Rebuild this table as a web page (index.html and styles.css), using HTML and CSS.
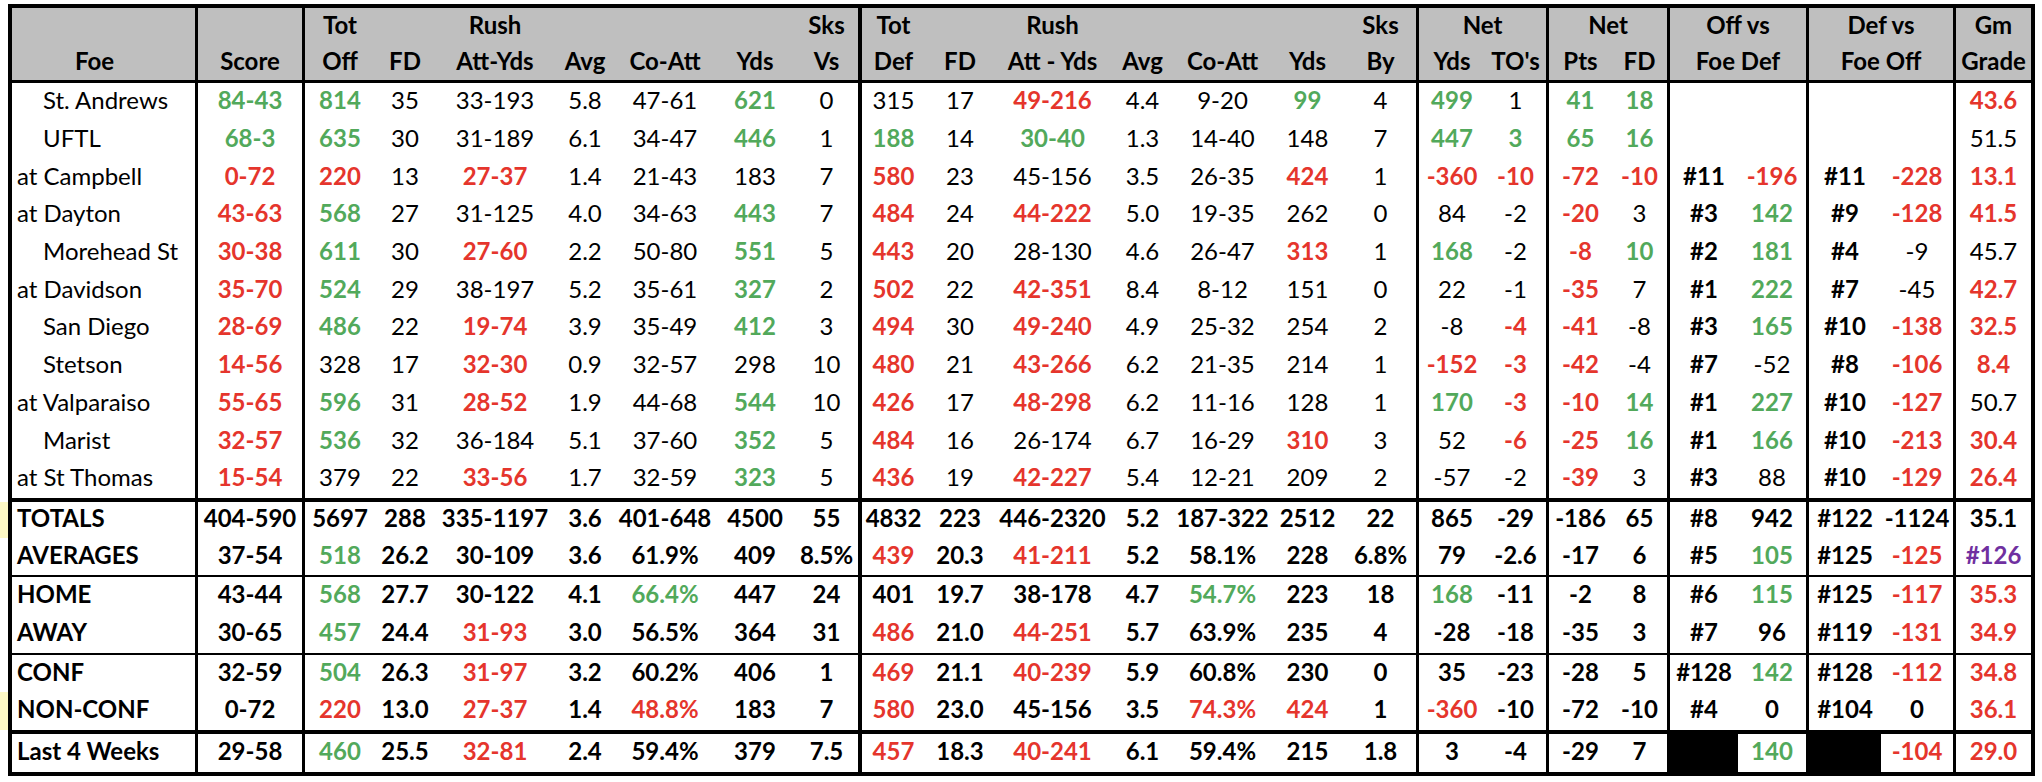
FILE: index.html
```html
<!DOCTYPE html>
<html>
<head>
<meta charset="utf-8">
<link rel="stylesheet" href="styles.css">
</head>
<body>
<div class="page">
<div class="stats">
  <div class="sec head">
    <div class="hrow">
      <span></span><span class="l"></span><span class="l">Tot</span><span></span><span>Rush</span><span></span><span></span><span></span><span>Sks</span>
      <span class="lt">Tot</span><span></span><span>Rush</span><span></span><span></span><span></span><span>Sks</span>
      <span class="l s2">Net</span><span class="l s2">Net</span><span class="l s2">Off vs</span><span class="l s2">Def vs</span><span class="l">Gm</span>
    </div>
    <div class="hrow">
      <span class="foeh">Foe</span><span class="l">Score</span><span class="l">Off</span><span>FD</span><span>Att-Yds</span><span>Avg</span><span>Co-Att</span><span>Yds</span><span>Vs</span>
      <span class="lt">Def</span><span>FD</span><span>Att - Yds</span><span>Avg</span><span>Co-Att</span><span>Yds</span><span>By</span>
      <span class="l">Yds</span><span>TO's</span><span class="l">Pts</span><span>FD</span><span class="l s2">Foe Def</span><span class="l s2">Foe Off</span><span class="l">Grade</span>
    </div>
  </div>

  <div class="sec body">
    <div class="row"><span class="foe home">St. Andrews</span><span class="g">84-43</span><span class="g">814</span><span>35</span><span>33-193</span><span>5.8</span><span>47-61</span><span class="g">621</span><span>0</span><span>315</span><span>17</span><span class="r">49-216</span><span>4.4</span><span>9-20</span><span class="g">99</span><span>4</span><span class="g">499</span><span>1</span><span class="g">41</span><span class="g">18</span><span></span><span></span><span></span><span></span><span class="r">43.6</span></div>
    <div class="row"><span class="foe home">UFTL</span><span class="g">68-3</span><span class="g">635</span><span>30</span><span>31-189</span><span>6.1</span><span>34-47</span><span class="g">446</span><span>1</span><span class="g">188</span><span>14</span><span class="g">30-40</span><span>1.3</span><span>14-40</span><span>148</span><span>7</span><span class="g">447</span><span class="g">3</span><span class="g">65</span><span class="g">16</span><span></span><span></span><span></span><span></span><span>51.5</span></div>
    <div class="row"><span class="foe">at Campbell</span><span class="r">0-72</span><span class="r">220</span><span>13</span><span class="r">27-37</span><span>1.4</span><span>21-43</span><span>183</span><span>7</span><span class="r">580</span><span>23</span><span>45-156</span><span>3.5</span><span>26-35</span><span class="r">424</span><span>1</span><span class="r">-360</span><span class="r">-10</span><span class="r">-72</span><span class="r">-10</span><span class="b">#11</span><span class="r">-196</span><span class="b">#11</span><span class="r">-228</span><span class="r">13.1</span></div>
    <div class="row"><span class="foe">at Dayton</span><span class="r">43-63</span><span class="g">568</span><span>27</span><span>31-125</span><span>4.0</span><span>34-63</span><span class="g">443</span><span>7</span><span class="r">484</span><span>24</span><span class="r">44-222</span><span>5.0</span><span>19-35</span><span>262</span><span>0</span><span>84</span><span>-2</span><span class="r">-20</span><span>3</span><span class="b">#3</span><span class="g">142</span><span class="b">#9</span><span class="r">-128</span><span class="r">41.5</span></div>
    <div class="row"><span class="foe home">Morehead St</span><span class="r">30-38</span><span class="g">611</span><span>30</span><span class="r">27-60</span><span>2.2</span><span>50-80</span><span class="g">551</span><span>5</span><span class="r">443</span><span>20</span><span>28-130</span><span>4.6</span><span>26-47</span><span class="r">313</span><span>1</span><span class="g">168</span><span>-2</span><span class="r">-8</span><span class="g">10</span><span class="b">#2</span><span class="g">181</span><span class="b">#4</span><span>-9</span><span>45.7</span></div>
    <div class="row"><span class="foe">at Davidson</span><span class="r">35-70</span><span class="g">524</span><span>29</span><span>38-197</span><span>5.2</span><span>35-61</span><span class="g">327</span><span>2</span><span class="r">502</span><span>22</span><span class="r">42-351</span><span>8.4</span><span>8-12</span><span>151</span><span>0</span><span>22</span><span>-1</span><span class="r">-35</span><span>7</span><span class="b">#1</span><span class="g">222</span><span class="b">#7</span><span>-45</span><span class="r">42.7</span></div>
    <div class="row"><span class="foe home">San Diego</span><span class="r">28-69</span><span class="g">486</span><span>22</span><span class="r">19-74</span><span>3.9</span><span>35-49</span><span class="g">412</span><span>3</span><span class="r">494</span><span>30</span><span class="r">49-240</span><span>4.9</span><span>25-32</span><span>254</span><span>2</span><span>-8</span><span class="r">-4</span><span class="r">-41</span><span>-8</span><span class="b">#3</span><span class="g">165</span><span class="b">#10</span><span class="r">-138</span><span class="r">32.5</span></div>
    <div class="row"><span class="foe home">Stetson</span><span class="r">14-56</span><span>328</span><span>17</span><span class="r">32-30</span><span>0.9</span><span>32-57</span><span>298</span><span>10</span><span class="r">480</span><span>21</span><span class="r">43-266</span><span>6.2</span><span>21-35</span><span>214</span><span>1</span><span class="r">-152</span><span class="r">-3</span><span class="r">-42</span><span>-4</span><span class="b">#7</span><span>-52</span><span class="b">#8</span><span class="r">-106</span><span class="r">8.4</span></div>
    <div class="row"><span class="foe">at Valparaiso</span><span class="r">55-65</span><span class="g">596</span><span>31</span><span class="r">28-52</span><span>1.9</span><span>44-68</span><span class="g">544</span><span>10</span><span class="r">426</span><span>17</span><span class="r">48-298</span><span>6.2</span><span>11-16</span><span>128</span><span>1</span><span class="g">170</span><span class="r">-3</span><span class="r">-10</span><span class="g">14</span><span class="b">#1</span><span class="g">227</span><span class="b">#10</span><span class="r">-127</span><span>50.7</span></div>
    <div class="row"><span class="foe home">Marist</span><span class="r">32-57</span><span class="g">536</span><span>32</span><span>36-184</span><span>5.1</span><span>37-60</span><span class="g">352</span><span>5</span><span class="r">484</span><span>16</span><span>26-174</span><span>6.7</span><span>16-29</span><span class="r">310</span><span>3</span><span>52</span><span class="r">-6</span><span class="r">-25</span><span class="g">16</span><span class="b">#1</span><span class="g">166</span><span class="b">#10</span><span class="r">-213</span><span class="r">30.4</span></div>
    <div class="row"><span class="foe">at St Thomas</span><span class="r">15-54</span><span>379</span><span>22</span><span class="r">33-56</span><span>1.7</span><span>32-59</span><span class="g">323</span><span>5</span><span class="r">436</span><span>19</span><span class="r">42-227</span><span>5.4</span><span>12-21</span><span>209</span><span>2</span><span>-57</span><span>-2</span><span class="r">-39</span><span>3</span><span class="b">#3</span><span>88</span><span class="b">#10</span><span class="r">-129</span><span class="r">26.4</span></div>
  </div>

  <div class="sec sum s-a">
    <div class="row mark"><span class="foe">TOTALS</span><span>404-590</span><span>5697</span><span>288</span><span>335-1197</span><span>3.6</span><span>401-648</span><span>4500</span><span>55</span><span>4832</span><span>223</span><span>446-2320</span><span>5.2</span><span>187-322</span><span>2512</span><span>22</span><span>865</span><span>-29</span><span>-186</span><span>65</span><span>#8</span><span>942</span><span>#122</span><span>-1124</span><span>35.1</span></div>
    <div class="row"><span class="foe">AVERAGES</span><span>37-54</span><span class="g">518</span><span>26.2</span><span>30-109</span><span>3.6</span><span>61.9%</span><span>409</span><span>8.5%</span><span class="r">439</span><span>20.3</span><span class="r">41-211</span><span>5.2</span><span>58.1%</span><span>228</span><span>6.8%</span><span>79</span><span>-2.6</span><span>-17</span><span>6</span><span>#5</span><span class="g">105</span><span>#125</span><span class="r">-125</span><span class="p">#126</span></div>
  </div>

  <div class="sec sum s-b">
    <div class="row"><span class="foe">HOME</span><span>43-44</span><span class="g">568</span><span>27.7</span><span>30-122</span><span>4.1</span><span class="g">66.4%</span><span>447</span><span>24</span><span>401</span><span>19.7</span><span>38-178</span><span>4.7</span><span class="g">54.7%</span><span>223</span><span>18</span><span class="g">168</span><span>-11</span><span>-2</span><span>8</span><span>#6</span><span class="g">115</span><span>#125</span><span class="r">-117</span><span class="r">35.3</span></div>
    <div class="row"><span class="foe">AWAY</span><span>30-65</span><span class="g">457</span><span>24.4</span><span class="r">31-93</span><span>3.0</span><span>56.5%</span><span>364</span><span>31</span><span class="r">486</span><span>21.0</span><span class="r">44-251</span><span>5.7</span><span>63.9%</span><span>235</span><span>4</span><span>-28</span><span>-18</span><span>-35</span><span>3</span><span>#7</span><span>96</span><span>#119</span><span class="r">-131</span><span class="r">34.9</span></div>
  </div>

  <div class="sec sum s-c">
    <div class="row"><span class="foe">CONF</span><span>32-59</span><span class="g">504</span><span>26.3</span><span class="r">31-97</span><span>3.2</span><span>60.2%</span><span>406</span><span>1</span><span class="r">469</span><span>21.1</span><span class="r">40-239</span><span>5.9</span><span>60.8%</span><span>230</span><span>0</span><span>35</span><span>-23</span><span>-28</span><span>5</span><span>#128</span><span class="g">142</span><span>#128</span><span class="r">-112</span><span class="r">34.8</span></div>
    <div class="row mark"><span class="foe">NON-CONF</span><span>0-72</span><span class="r">220</span><span>13.0</span><span class="r">27-37</span><span>1.4</span><span class="r">48.8%</span><span>183</span><span>7</span><span class="r">580</span><span>23.0</span><span>45-156</span><span>3.5</span><span class="r">74.3%</span><span class="r">424</span><span>1</span><span class="r">-360</span><span>-10</span><span>-72</span><span>-10</span><span>#4</span><span>0</span><span>#104</span><span>0</span><span class="r">36.1</span></div>
  </div>

  <div class="sec sum s-d">
    <div class="row"><span class="foe">Last 4 Weeks</span><span>29-58</span><span class="g">460</span><span>25.5</span><span class="r">32-81</span><span>2.4</span><span>59.4%</span><span>379</span><span>7.5</span><span class="r">457</span><span>18.3</span><span class="r">40-241</span><span>6.1</span><span>59.4%</span><span>215</span><span>1.8</span><span>3</span><span>-4</span><span>-29</span><span>7</span><span class="blk"></span><span class="g">140</span><span class="blk"></span><span class="r">-104</span><span class="r">29.0</span></div>
  </div>
</div>
</div>
</body>
</html>
```

FILE: styles.css
```css
html, body {
  margin: 0;
  padding: 0;
  background: #ffffff;
}

.page {
  padding: 4px 0 0 8px;
  font-family: "Lato", "Liberation Sans", sans-serif;
  font-size: 24px;
  color: #000;
}

.stats {
  --cols: 183px 107px 73px 60px 120px 60px 100px 80px 63px 67px 70px 115px 65px 95px 75px 71px 69px 61px 66px 55px 71px 68px 75px 72px 78px;
  width: 2027px;
  box-sizing: border-box;
  border: 4px solid #000;
  display: flex;
  flex-direction: column;
}

.sec {
  display: flex;
  flex-direction: column;
}

.head {
  background: #bfbfbf;
  border-bottom: 3px solid #000;
  font-weight: 700;
}

.body {
  border-bottom: 4px solid #000;
}

.s-a, .s-b {
  border-bottom: 2px solid #000;
}

.s-c {
  border-bottom: 4px solid #000;
}

.hrow, .row {
  display: grid;
  grid-template-columns: var(--cols);
}

.hrow {
  height: 36px;
}

.body .row {
  height: 37.7px;
}

.s-a .row {
  height: 36.5px;
}

.s-b .row {
  height: 38px;
}

.s-c .row {
  height: 37.5px;
}

.s-d .row {
  height: 38px;
}

.hrow > span,
.row > span {
  box-sizing: border-box;
  display: flex;
  align-items: center;
  justify-content: center;
  white-space: nowrap;
  padding-bottom: 4px;
}

.hrow > .l {
  border-left: 3px solid #000;
}

.hrow > .lt {
  border-left: 4px solid #000;
}

.hrow > .s2 {
  grid-column: span 2;
}

.hrow > .foeh {
  padding-right: 18px;
}

.row > span:nth-child(2),
.row > span:nth-child(3),
.row > span:nth-child(17),
.row > span:nth-child(19),
.row > span:nth-child(21),
.row > span:nth-child(23),
.row > span:nth-child(25) {
  border-left: 3px solid #000;
}

.row > span:nth-child(10) {
  border-left: 4px solid #000;
}

.row > .foe {
  justify-content: flex-start;
  padding-left: 5px;
}

.row > .home {
  padding-left: 31px;
}

.sum {
  font-weight: 700;
}

.g {
  color: #52a95b;
  font-weight: 700;
}

.r {
  color: #e5352c;
  font-weight: 700;
}

.b {
  font-weight: 700;
}

.p {
  color: #7030a0;
  font-weight: 700;
}

.row > .blk {
  background: #000;
}

.mark {
  position: relative;
}

.mark::before {
  content: "";
  position: absolute;
  left: -12px;
  top: 0;
  width: 8px;
  height: 100%;
  background: #fdf8c4;
}
```
